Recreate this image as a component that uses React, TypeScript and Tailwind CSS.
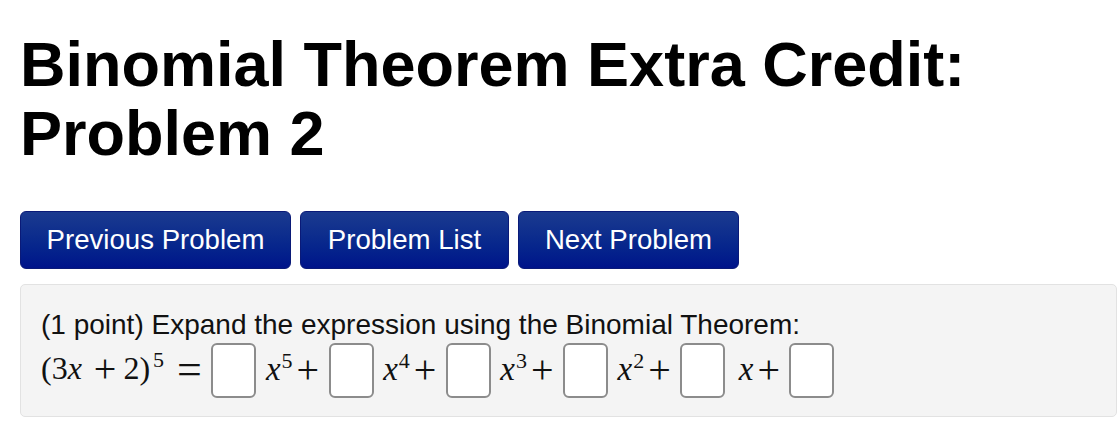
import React from 'react'

const sans = { fontFamily: '"Liberation Sans", Arial, sans-serif' }
const serif = { fontFamily: '"Liberation Serif", "Times New Roman", serif' }

function AnswerBox() {
  return (
    <input
      type="text"
      aria-label="answer"
      className="w-[45px] h-[55px] rounded-[6px] border-2 border-[#8c8c8c] bg-white shrink-0 outline-none"
    />
  )
}

function Plus({ className = '' }: { className?: string }) {
  return <span className={`inline-block text-[40px] leading-none relative top-[3px] ${className}`}>+</span>
}

function Sup({ children, className = '' }: { children: React.ReactNode; className?: string }) {
  return <span className={`inline-block text-[22px] leading-none relative -top-[12px] ${className}`}>{children}</span>
}

// x^n+ , laid out the way MathJax draws it
function Term({ power }: { power?: string }) {
  return (
    <span className="flex items-baseline whitespace-nowrap text-[#111] mt-[3.5px]" style={serif}>
      <i className={`inline-block text-[33px] leading-none ${power ? '' : 'ml-[4px]'}`}>x</i>
      {power && <Sup className="ml-[1px]">{power}</Sup>}
      <Plus className={power ? 'ml-[4px]' : 'ml-[4px] mr-[-1px]'} />
    </span>
  )
}

const navButtons = [
  { label: 'Previous Problem', w: 'w-[271px]' },
  { label: 'Problem List', w: 'w-[209px]' },
  { label: 'Next Problem', w: 'w-[221px]' },
]

export default function App() {
  return (
    <div className="w-[1120px] h-[448px] bg-white text-black overflow-hidden" style={sans}>
      <div className="pl-[20px] pr-[3px] pt-[30px]">
        <h1 className="text-[63px] font-bold leading-[69px]">
          Binomial Theorem Extra Credit:
          <br />
          Problem 2
        </h1>

        <div className="flex gap-[9px] mt-[43px]">
          {navButtons.map((b) => (
            <button
              key={b.label}
              className={`${b.w} h-[58px] rounded-[6px] border border-[#0a1a78] bg-gradient-to-b from-[#1b3a8f] to-[#00138a] text-white text-[27.6px] leading-none`}
            >
              {b.label}
            </button>
          ))}
        </div>

        <div className="mt-[15px] w-[1097px] h-[133px] rounded-[5px] border border-[#e2e2e2] bg-[#f4f4f4] px-[20px] pt-[20px]">
          <p className="text-[28px] leading-[40px] text-[#111]">
            (1 point) Expand the expression using the Binomial Theorem:
          </p>
          <div className="flex items-start gap-[9.5px] -mt-[2px]">
            <span className="flex items-baseline whitespace-nowrap text-[#111] text-[32px]" style={serif}>
              <span className="inline-block leading-none">(</span>
              <span className="inline-block leading-none">3</span>
              <i className="inline-block leading-none">x</i>
              <Plus className="ml-[12px]" />
              <span className="inline-block leading-none ml-[7px]">2</span>
              <span className="inline-block leading-none">)</span>
              <Sup className="ml-[3px]">5</Sup>
              <span className="inline-block text-[44px] leading-none relative top-[5px] ml-[13px]">=</span>
            </span>
            <AnswerBox />
            <Term power="5" />
            <AnswerBox />
            <Term power="4" />
            <AnswerBox />
            <Term power="3" />
            <AnswerBox />
            <Term power="2" />
            <AnswerBox />
            <Term />
            <AnswerBox />
          </div>
        </div>
      </div>
    </div>
  )
}
